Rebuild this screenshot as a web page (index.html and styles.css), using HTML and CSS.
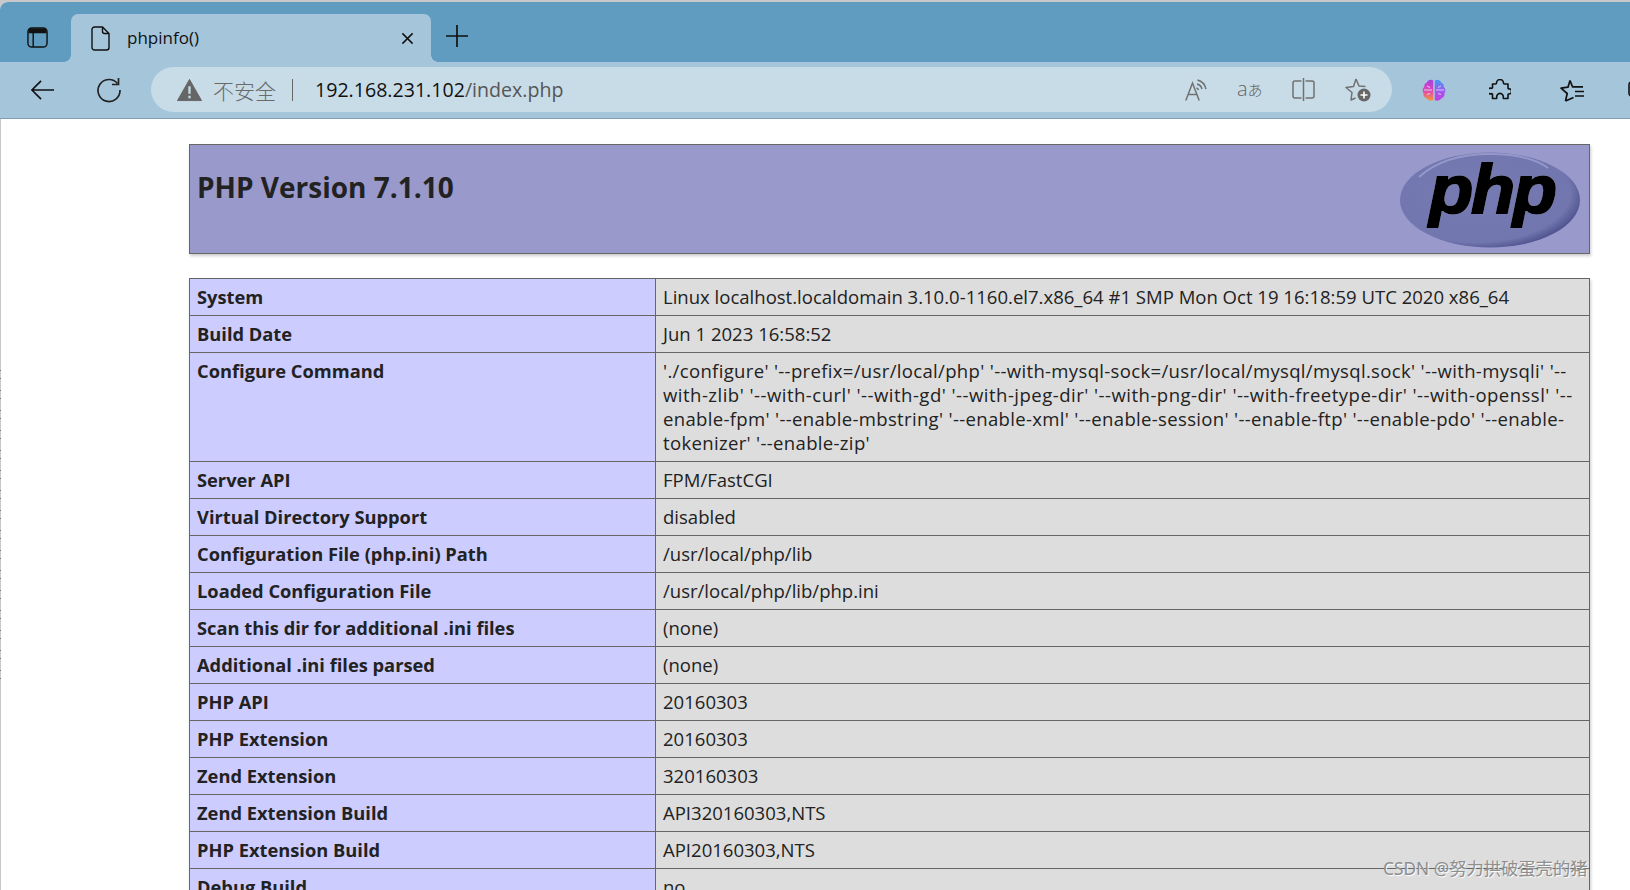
FILE: index.html
```html
<!DOCTYPE html>
<html lang="zh">
<head>
<meta charset="utf-8">
<title>phpinfo()</title>
<link rel="stylesheet" href="styles.css">
</head>
<body>
<div class="window">
  <div class="tabstrip">
    <svg class="ic ic-side" viewBox="0 0 22 22"><rect x="1" y="1" width="20" height="20" rx="4" fill="none" stroke="#111" stroke-width="1.500"/><path d="M1.500 5a3.500 3.500 0 0 1 3.500-3.500h12a3.500 3.500 0 0 1 3.500 3.500v1.500h-19z" fill="#111"/><path d="M6.500 6v15" stroke="#111" stroke-width="1.500"/></svg>
    <div class="tab">
      <svg class="ic ic-doc" viewBox="0 0 19 25"><path d="M3.500 1h8l6.500 6.500v14a2.500 2.500 0 0 1-2.500 2.500h-12a2.500 2.500 0 0 1-2.500-2.500v-18a2.500 2.500 0 0 1 2.500-2.500zM11.500 1v4.500a2 2 0 0 0 2 2h4.500" fill="none" stroke="#111" stroke-width="1.400"/></svg>
      <span class="tab-title">phpinfo()</span>
      <svg class="ic ic-close" viewBox="0 0 14 14"><path d="M1.500 1.500l11 11M12.500 1.500l-11 11" stroke="#111" stroke-width="1.600"/></svg>
    </div>
    <svg class="ic ic-plus" viewBox="0 0 22 22"><path d="M11 0v22M0 11h22" stroke="#111" stroke-width="1.700"/></svg>
  </div>
  <div class="toolbar">
    <svg class="ic ic-back" viewBox="0 0 26 22"><path d="M25 11H2M11.500 1.500L2 11l9.500 9.500" fill="none" stroke="#111" stroke-width="1.700"/></svg>
    <svg class="ic ic-reload" viewBox="0 0 26 26"><path d="M21.500 6.500A11 11 0 1 0 24 13" fill="none" stroke="#222" stroke-width="1.700"/><path d="M22.500 1v6.500H16" fill="none" stroke="#222" stroke-width="1.700"/></svg>
    <div class="address">
      <svg class="ic ic-warn" viewBox="0 0 26 24"><path d="M13 1L25.500 23H.500z" fill="#666" stroke="#666" stroke-linejoin="round"/><path d="M13 8v8M13 18v2.500" stroke="#c8dce8" stroke-width="2.400"/></svg>
      <span class="insecure">不安全</span>
      <span class="addr-sep"></span>
      <span class="url"><span class="host">192.168.231.102</span>/index.php</span>
      <span class="addr-icons">
        <svg class="ic ic-aloud" viewBox="0 0 22 22"><path d="M.800 21.500L7.500 4l6.700 17.500M3 15.500h9" fill="none" stroke="#707070" stroke-width="1.500"/><path d="M12.500 1c4 1 7.500 4.500 8.500 9M12 5c2.500.7 4.500 2.500 5 5M11.500 9c1 .3 1.800 1.200 2 2" fill="none" stroke="#707070" stroke-width="1.500"/></svg>
        <span class="translate"><span>a</span><span class="hira">あ</span></span>
        <svg class="ic ic-split" viewBox="0 0 23 23"><path d="M9.500 3H3a2 2 0 0 0-2 2v13a2 2 0 0 0 2 2h6.500M13.500 3H20a2 2 0 0 1 2 2v13a2 2 0 0 1-2 2h-6.500" fill="none" stroke="#707070" stroke-width="1.500"/><path d="M11.500 0v23" stroke="#707070" stroke-width="1.500"/></svg>
        <svg class="ic ic-favadd" viewBox="0 0 26 24"><path d="M11 1l3 7 6.500.5M10.500 20L6 22l1-7.500L1 9.500l7.500-1L11 1" fill="none" stroke="#707070" stroke-width="1.500" stroke-linejoin="round"/><circle cx="19" cy="17" r="6.500" fill="#666"/><path d="M19 13.500v7M15.500 17h7" stroke="#fff" stroke-width="1.600"/></svg>
      </span>
    </div>
    <svg class="ic ic-brain" viewBox="0 0 24 22">
      <defs><linearGradient id="brainL" x1="0" y1="0" x2="0" y2="1"><stop offset="0" stop-color="#a83ee8"/><stop offset=".55" stop-color="#e14ab0"/><stop offset="1" stop-color="#f59a30"/></linearGradient>
      <linearGradient id="brainR" x1="0" y1="0" x2="0" y2="1"><stop offset="0" stop-color="#3f9bf2"/><stop offset=".5" stop-color="#9a5cf0"/><stop offset="1" stop-color="#c83ce0"/></linearGradient></defs>
      <path d="M11.200 1.500C9 0 6 .5 4.800 3.500 2 4.500 2.200 7.500 2.200 8 .5 9.500 0 12 1.500 14c-.5 2.500 1 5 3 5.300 1.500 2.500 5 3.200 6.700 1.700z" fill="url(#brainL)"/>
      <path d="M12.800 1.500C15 0 18 .5 19.200 3.500c2.800 1 2.600 4 2.600 4.500 1.700 1.500 2.200 4 .7 6 .5 2.500-1 5-3 5.300-1.500 2.500-5 3.200-6.700 1.700z" fill="url(#brainR)"/>
      <path d="M2 11h8M14 11h8M5 7l3 1.500M19 7l-3 1.500M5 15.500l3-1M19 15.500l-3-1" stroke="#e4d8f5" stroke-width=".9"/>
    </svg>
    <svg class="ic ic-puzzle" viewBox="0 0 22 23"><path d="M7.500 4a3.500 3.500 0 0 1 7 0c0 .6.400 1 1 1H19v4c0 .6.500 1 1 .800a2.600 2.600 0 0 1 0 5.200c-.500-.200-1 .200-1 .800v3.700h-4c-.600 0-1-.500-.800-1a3.300 3.300 0 1 0-6.400 0c.200.500-.200 1-.800 1H3.500v-4c0-.600-.500-1-1-.800a2.900 2.900 0 1 1 0-5.400c.500.200 1-.200 1-.800V5h3c.600 0 1-.400 1-1z" fill="none" stroke="#111" stroke-width="1.600" stroke-linejoin="round"/></svg>
    <span class="tool-sep"></span>
    <svg class="ic ic-favs" viewBox="0 0 24 23"><path d="M10 1.500l2.500 6.300H23M5.500 22l1.700-7.500L1 9.200l7-1L10 1.500M5.500 22l8-3.500" fill="none" stroke="#111" stroke-width="1.700" stroke-linejoin="round"/><path d="M15 12.500h9M15 17h9" stroke="#111" stroke-width="1.600"/></svg>
    <svg class="ic ic-cut" viewBox="0 0 14 24"><path d="M12 4H6a3 3 0 0 0-3 3v8a3 3 0 0 0 3 3l2 3" fill="none" stroke="#111" stroke-width="1.600"/></svg>
  </div>
  <main class="page">
    <div class="center">
      <div class="php-head">
        <h1 class="php-title">PHP Version 7.1.10</h1>
        <svg class="php-logo" viewBox="0 0 182 98">
          <defs><radialGradient id="oval" cx=".42" cy=".42" r=".62"><stop offset="0" stop-color="#777bb3"/><stop offset=".85" stop-color="#7176ae"/><stop offset="1" stop-color="#4c4f8c"/></radialGradient></defs>
          <ellipse cx="91" cy="49" rx="90" ry="47.500" fill="url(#oval)"/>
          <path d="M20 26C40 8 66 3 91 3c24 0 44 4 58 14" fill="none" stroke="#a3a6d4" stroke-width="2" opacity=".7"/>
          <text class="php-logo-text" transform="translate(93 62) scale(1.06 1)" text-anchor="middle">php</text>
        </svg>
      </div>
      <table class="info">
        <colgroup><col class="col-e"><col class="col-v"></colgroup>
        <tbody>
          <tr><td class="e">System</td><td class="v">Linux localhost.localdomain 3.10.0-1160.el7.x86_64 #1 SMP Mon Oct 19 16:18:59 UTC 2020 x86_64</td></tr>
          <tr><td class="e">Build Date</td><td class="v">Jun 1 2023 16:58:52</td></tr>
          <tr><td class="e">Configure Command</td><td class="v cmd">'./configure' '--prefix=/usr/local/php' '--with-mysql-sock=/usr/local/mysql/mysql.sock' '--with-mysqli' '--<br><span class="cmd-wide">with-zlib' '--with-curl' '--with-gd' '--with-jpeg-dir' '--with-png-dir' '--with-freetype-dir' '--with-openssl' '--</span><br>enable-fpm' '--enable-mbstring' '--enable-xml' '--enable-session' '--enable-ftp' '--enable-pdo' '--enable-<br>tokenizer' '--enable-zip'</td></tr>
          <tr><td class="e">Server API</td><td class="v">FPM/FastCGI</td></tr>
          <tr><td class="e">Virtual Directory Support</td><td class="v">disabled</td></tr>
          <tr><td class="e">Configuration File (php.ini) Path</td><td class="v">/usr/local/php/lib</td></tr>
          <tr><td class="e">Loaded Configuration File</td><td class="v">/usr/local/php/lib/php.ini</td></tr>
          <tr><td class="e">Scan this dir for additional .ini files</td><td class="v">(none)</td></tr>
          <tr><td class="e">Additional .ini files parsed</td><td class="v">(none)</td></tr>
          <tr><td class="e">PHP API</td><td class="v">20160303</td></tr>
          <tr><td class="e">PHP Extension</td><td class="v">20160303</td></tr>
          <tr><td class="e">Zend Extension</td><td class="v">320160303</td></tr>
          <tr><td class="e">Zend Extension Build</td><td class="v">API320160303,NTS</td></tr>
          <tr><td class="e">PHP Extension Build</td><td class="v">API20160303,NTS</td></tr>
          <tr><td class="e">Debug Build</td><td class="v">no</td></tr>
        </tbody>
      </table>
    </div>
  </main>
</div>
<div class="edge-ticks"></div>
<div class="watermark">CSDN @努力拱破蛋壳的猪</div>
</body>
</html>
```
FILE: styles.css
```css
* { box-sizing: border-box; }
html, body { margin: 0; height: 890px; overflow: hidden; }
body {
  position: relative;
  width: 1630px;
  background: #c9c9c9;
  font-family: "Open Sans", "Noto Sans", "Noto Sans CJK SC", sans-serif;
  color: #111;
  padding-top: 2px;
}
.window {
  height: 888px;
  border-top-left-radius: 8px;
  overflow: hidden;
  display: flex;
  flex-direction: column;
  background: #fff;
}
.ic { display: block; flex: none; }

.tabstrip {
  height: 60px;
  flex: none;
  background: #5f9cbf;
  display: flex;
  align-items: flex-end;
  padding-left: 27px;
}
.ic-side { width: 21px; height: 21px; margin: 0 23px 14px 0; }
.tab {
  position: relative;
  width: 360px;
  height: 48px;
  background: #a4c5da;
  border-radius: 7px 7px 0 0;
  display: flex;
  align-items: center;
  padding-left: 20px;
}
.tab::before, .tab::after {
  content: "";
  position: absolute;
  bottom: 0;
  width: 7px;
  height: 7px;
}
.tab::before { left: -7px; background: radial-gradient(circle at 0 0, #5f9cbf 6.500px, #a4c5da 7px); }
.tab::after { right: -7px; background: radial-gradient(circle at 100% 0, #5f9cbf 6.500px, #a4c5da 7px); }
.ic-doc { width: 19px; height: 25px; }
.tab-title { font-size: 17px; line-height: 23px; margin: 0 0 2px 17px; flex: 1; }
.ic-close { width: 13px; height: 13px; margin-right: 17px; }
.ic-plus { width: 22px; height: 22px; margin: 0 0 15px 15px; }

.toolbar {
  height: 57px;
  flex: none;
  background: #a4c5da;
  border-bottom: 1px solid #7f9fb5;
  display: flex;
  align-items: center;
  padding-left: 30px;
  overflow: hidden;
}
.ic-back { width: 25px; height: 22px; }
.ic-reload { width: 26px; height: 26px; margin-left: 41px; }
.address {
  flex: none;
  width: 1241px;
  height: 45px;
  margin-left: 29px;
  margin-top: -1px;
  border-radius: 23px;
  background: #c8dce8;
  display: flex;
  align-items: center;
  padding: 0 21px 0 26px;
}
.ic-warn { width: 25px; height: 24px; }
.insecure { font-size: 21px; color: #6a6a6a; margin-left: 11px; font-family: "Noto Sans CJK SC", sans-serif; font-weight: 300; }
.addr-sep { width: 1px; height: 22px; background: #666; margin-left: 16px; }
.url { font-size: 19.600px; color: #555; margin-left: 22px; }
.host { color: #111; }
.addr-icons { margin-left: auto; display: flex; align-items: center; }
.ic-aloud { width: 22px; height: 22px; }
.translate { width: 25px; margin-left: 30px; font-size: 20px; line-height: 24px; color: #666; display: flex; align-items: baseline; font-weight: 300; }
.hira { font-family: "Noto Sans CJK JP", sans-serif; font-size: 15px; }
.ic-split { width: 23px; height: 23px; margin-left: 30px; }
.ic-favadd { width: 26px; height: 24px; margin-left: 30px; }
.ic-brain { width: 24px; height: 22px; margin-left: 30px; }
.ic-puzzle { width: 22px; height: 23px; margin-left: 43px; }
.tool-sep { width: 1px; height: 24px; background: #7a93a6; margin-left: 26px; }
.ic-favs { width: 24px; height: 23px; margin-left: 23px; }
.ic-cut { width: 14px; height: 24px; margin-left: 42px; }

.page {
  flex: 1;
  min-height: 0;
  padding: 25px 0 0 189px;
  overflow: hidden;
  background: #fff;
}
.center { width: 1401px; }
.php-head {
  height: 110px;
  background: #9999cc;
  border: 1px solid #666;
  box-shadow: 1px 2px 3px #ccc;
  display: flex;
  justify-content: space-between;
  align-items: flex-start;
  padding: 6px 8px 0 7px;
  margin-bottom: 24px;
}
.php-title { margin: 17px 0 0; font-size: 28px; line-height: 38px; font-weight: 700; color: #222; }
.php-logo { width: 182px; height: 98px; flex: none; }
.php-logo-text {
  font-family: "Liberation Sans", sans-serif;
  font-style: italic;
  font-weight: 700;
  font-size: 68px;
  letter-spacing: -2px;
  fill: #000;
  stroke: #000;
  stroke-width: 2px;
  filter: drop-shadow(0 0 .6px #d8d8ee);
}
.info {
  width: 1401px;
  table-layout: fixed;
  border-collapse: collapse;
  box-shadow: 1px 2px 3px #ccc;
  line-height: 24px;
  color: #222;
}
.col-e { width: 466px; }
.info td { border: 1px solid #666; padding: 6px 7px; vertical-align: top; height: 37px; }
.e { background: #ccccff; font-weight: 700; font-size: 18.300px; }
.v { background: #dddddd; font-size: 18.550px; white-space: nowrap; }
.cmd { letter-spacing: .33px; }
.cmd-wide { letter-spacing: .48px; }

.edge-ticks {
  position: absolute;
  left: 0;
  top: 119px;
  width: 1px;
  height: 771px;
  background: #c9c9c9;
}
.edge-ticks::before {
  content: "";
  position: absolute;
  left: 0;
  top: 240px;
  width: 1px;
  height: 320px;
  background: repeating-linear-gradient(to bottom, #c9c9c9 0 11px, #777 11px 12px, #c9c9c9 12px 19px, #777 19px 20px);
}
.watermark {
  position: absolute;
  left: 1383px;
  top: 855px;
  font-family: "Noto Sans", "Noto Sans CJK SC", sans-serif;
  font-size: 17.300px;
  line-height: 28px;
  color: #8f8f8f;
  text-shadow: 1px 1px 1px #fff;
  white-space: nowrap;
}
```
